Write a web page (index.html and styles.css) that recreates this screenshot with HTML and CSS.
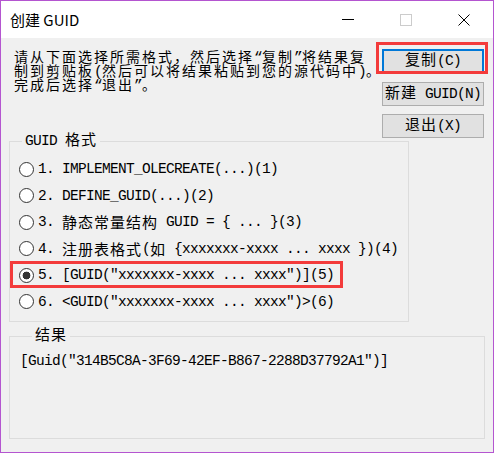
FILE: index.html
```html
<!DOCTYPE html>
<html lang="zh-CN">
<head>
<meta charset="utf-8">
<title>创建 GUID</title>
<link rel="stylesheet" href="styles.css">
</head>
<body>
<div class="window">
  <!-- caption bar -->
  <div class="titlebar">
    <div class="caption">创建 GUID</div>
    <div class="caption-buttons">
      <span class="cbtn"><svg width="12" height="12" viewBox="0 0 12 12"><path d="M0 5.5H12" stroke="#000" fill="none"/></svg></span>
      <span class="cbtn"><svg width="12" height="12" viewBox="0 0 12 12"><rect x="0.5" y="0.5" width="11" height="11" stroke="#cccccc" fill="none"/></svg></span>
      <span class="cbtn"><svg width="12" height="12" viewBox="0 0 12 12"><path d="M0.5 0.5L11.5 11.5M11.5 0.5L0.5 11.5" stroke="#000" fill="none"/></svg></span>
    </div>
  </div>

  <div class="client">
    <div class="top">
      <p class="intro">请从下面选择所需格式，然后选择<span class="en">“</span>复制<span class="en">”</span>将结果复<br>制到剪贴板<span class="en">(</span>然后可以将结果粘贴到您的源代码中<span class="en">)</span>。<br>完成后选择<span class="en">“</span>退出<span class="en">”</span>。</p>
      <div class="actions">
        <div class="mark"><button class="btn default"><span class="zh">复制</span>(C)</button></div>
        <button class="btn"><span class="zh">新建</span> GUID(N)</button>
        <button class="btn"><span class="zh">退出</span>(X)</button>
      </div>
    </div>

    <fieldset class="group formats">
      <legend>GUID <span class="zh">格式</span></legend>
      <label class="opt"><input type="radio" name="fmt" class="radio">1. IMPLEMENT_OLECREATE(...)(1)</label>
      <label class="opt"><input type="radio" name="fmt" class="radio">2. DEFINE_GUID(...)(2)</label>
      <label class="opt"><input type="radio" name="fmt" class="radio">3. <span class="zh">静态常量结构</span> GUID = { ... }(3)</label>
      <label class="opt"><input type="radio" name="fmt" class="radio">4. <span class="zh">注册表格式</span>(<span class="zh">如</span> {xxxxxxx-xxxx ... xxxx })(4)</label>
      <label class="opt picked"><input type="radio" name="fmt" class="radio" checked>5. [GUID("xxxxxxx-xxxx ... xxxx")](5)</label>
      <label class="opt"><input type="radio" name="fmt" class="radio">6. &lt;GUID("xxxxxxx-xxxx ... xxxx")&gt;(6)</label>
    </fieldset>

    <fieldset class="group result">
      <legend><span class="zh">结果</span></legend>
      <div class="output">[Guid("314B5C8A-3F69-42EF-B867-2288D37792A1")]</div>
    </fieldset>
  </div>
</div>
</body>
</html>
```

FILE: styles.css
```css
html, body {
  margin: 0;
  padding: 0;
}
body {
  background: #f0f0f0;
}

.window {
  width: 494px;
  height: 453px;
  box-sizing: border-box;
  border: 1px solid #b455d0;
  display: flex;
  flex-direction: column;
  background: #f0f0f0;
  color: #000;
  font: 14.5px/16px "Liberation Mono", "Noto Sans CJK SC", monospace;
  letter-spacing: -0.7px;
}

/* chinese runs: full width cells next to the half width latin,
   line-height 0 keeps them from growing the line box */
.zh {
  font-family: "Noto Sans CJK SC", sans-serif;
  font-size: 15px;
  letter-spacing: 1px;
  line-height: 0;
}
/* latin runs inside chinese text */
.en {
  font-family: "Liberation Mono", monospace;
  font-size: 14.5px;
  letter-spacing: -0.7px;
  line-height: 0;
}

/* caption bar */
.titlebar {
  flex: none;
  height: 37px;
  background: #fff;
  display: flex;
}
.caption {
  padding-left: 9px;
  font: 15px/37px "Noto Sans CJK SC", sans-serif;
  letter-spacing: 0;
}
.caption-buttons {
  margin-left: auto;
  display: flex;
}
.cbtn {
  width: 58px;
  height: 37px;
  box-sizing: border-box;
  padding-top: 13px;
  display: flex;
  justify-content: center;
  align-items: flex-start;
}

/* dialog body */
.client {
  flex: 1;
  display: flex;
  flex-direction: column;
  padding: 0 8px 13px 8px;
}

.top {
  display: flex;
  align-items: flex-start;
  padding-top: 11px;
}
.intro {
  flex: 1;
  margin: 0;
  padding-left: 5px;
  font: 14px/14px "Noto Sans CJK SC", sans-serif;
  letter-spacing: 2px;
  white-space: nowrap;
}
.actions {
  display: flex;
  flex-direction: column;
  gap: 8.5px;
  margin-right: 1px;
  margin-bottom: -5px;
}

.btn {
  display: block;
  width: 102px;
  height: 24px;
  box-sizing: border-box;
  margin: 0;
  padding: 0;
  background: #e1e1e1;
  border: 1px solid #adadad;
  color: #000;
  font: inherit;
  letter-spacing: inherit;
}
.btn.default {
  border: 2px solid #0078d7;
}

/* red marker frames */
.mark,
.opt.picked {
  position: relative;
}
.mark::after,
.opt.picked::after {
  content: "";
  position: absolute;
  box-sizing: border-box;
  border: 3px solid #f33b3b;
  pointer-events: none;
}
.mark::after {
  left: -6px;
  top: -7px;
  right: -4px;
  bottom: -1px;
}
.opt.picked::after {
  left: 0;
  top: -1.5px;
  width: 333px;
  height: 27.5px;
}

/* group boxes */
.group {
  margin: 0;
  padding: 0;
  border: 1px solid #dcdcdc;
  box-sizing: border-box;
  min-width: 0;
}
.group legend {
  margin-left: 12px;
  padding: 0 3px;
  line-height: 16px;
}

.formats {
  width: 400px;
  padding: 7px 0 6px 0;
}
.opt {
  display: flex;
  align-items: center;
  height: 26.5px;
  box-sizing: border-box;
  padding-left: 9px;
  white-space: pre;
}

.radio {
  appearance: none;
  -webkit-appearance: none;
  flex: none;
  width: 15px;
  height: 15px;
  margin: 0 4px 0 0;
  box-sizing: border-box;
  border: 1px solid #333;
  border-radius: 50%;
  background: #fff;
}
.radio:checked {
  background: radial-gradient(circle, #333 0 3.6px, #fff 4.2px);
}

.result {
  flex: 1;
  width: 476px;
  margin-top: 6px;
  padding: 9px 0 0 10px;
}
.output {
  line-height: 16px;
  white-space: pre;
}
```
